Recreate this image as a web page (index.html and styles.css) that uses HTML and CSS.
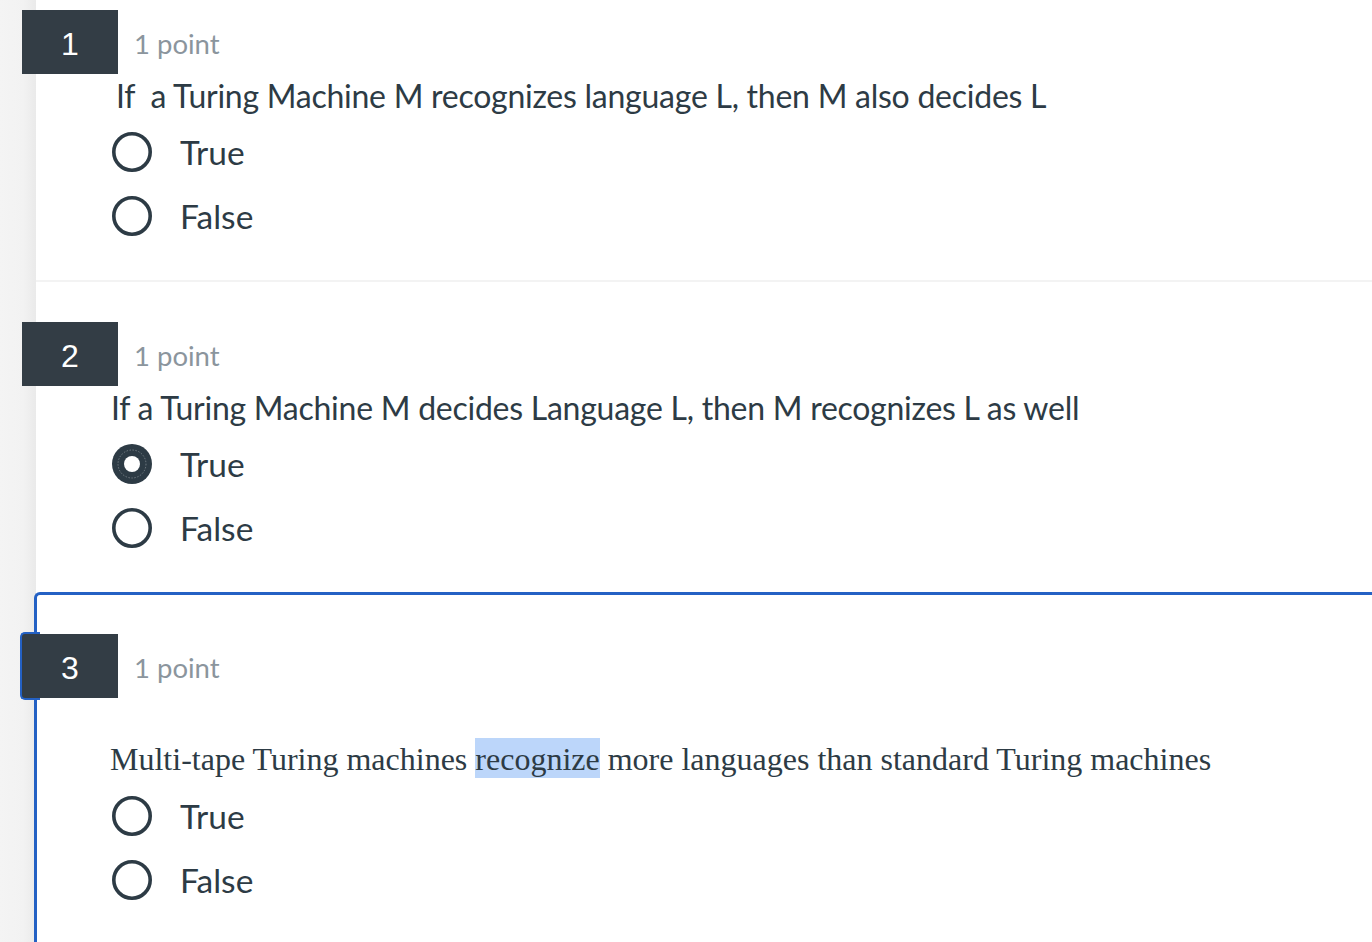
FILE: index.html
```html
<!DOCTYPE html>
<html lang="en">
<head>
<meta charset="utf-8">
<title>Quiz</title>
<link rel="stylesheet" href="styles.css">
</head>
<body>
<div class="page">
  <div class="rail"></div>
  <main class="quiz">
    <section class="question q1 separated">
      <div class="q-header">
        <div class="badge">1</div>
        <div class="points">1 point</div>
      </div>
      <div class="q-text indented">If&nbsp; a Turing Machine M recognizes language L, then M also decides L</div>
      <div class="answers">
        <label class="answer"><svg class="radio" viewBox="0 0 40 40"><circle cx="20" cy="20" r="18.2" fill="none" stroke="#2d3b45" stroke-width="3.6"/></svg><span class="a-label">True</span></label>
        <label class="answer"><svg class="radio" viewBox="0 0 40 40"><circle cx="20" cy="20" r="18.2" fill="none" stroke="#2d3b45" stroke-width="3.6"/></svg><span class="a-label">False</span></label>
      </div>
    </section>

    <section class="question q2">
      <div class="q-header">
        <div class="badge">2</div>
        <div class="points">1 point</div>
      </div>
      <div class="q-text">If a Turing Machine M decides Language L, then M recognizes L as well</div>
      <div class="answers">
        <label class="answer"><svg class="radio" viewBox="0 0 40 40"><circle cx="20" cy="20" r="20" fill="#2d3b45"/><circle cx="20" cy="20" r="14" fill="none" stroke="#ffffff" stroke-opacity="0.3" stroke-width="1" stroke-dasharray="1.5 1.5"/><circle cx="20" cy="20" r="8" fill="#ffffff"/></svg><span class="a-label">True</span></label>
        <label class="answer"><svg class="radio" viewBox="0 0 40 40"><circle cx="20" cy="20" r="18.2" fill="none" stroke="#2d3b45" stroke-width="3.6"/></svg><span class="a-label">False</span></label>
      </div>
    </section>

    <section class="question q3 focused">
      <div class="q-header">
        <div class="badge">3</div>
        <div class="points">1 point</div>
      </div>
      <div class="q-text serif">Multi-tape Turing machines <span class="highlight">recognize</span> more languages than standard Turing machines</div>
      <div class="answers">
        <label class="answer"><svg class="radio" viewBox="0 0 40 40"><circle cx="20" cy="20" r="18.2" fill="none" stroke="#2d3b45" stroke-width="3.6"/></svg><span class="a-label">True</span></label>
        <label class="answer"><svg class="radio" viewBox="0 0 40 40"><circle cx="20" cy="20" r="18.2" fill="none" stroke="#2d3b45" stroke-width="3.6"/></svg><span class="a-label">False</span></label>
      </div>
    </section>
  </main>
</div>
</body>
</html>
```

FILE: styles.css
```css
html, body {
  margin: 0;
  padding: 0;
  height: 942px;
  overflow: hidden;
  background: #ffffff;
}

body {
  font-family: Lato, "Open Sans", sans-serif;
  color: #2d3b45;
}

.page {
  display: flex;
  min-height: 942px;
}

.rail {
  flex: 0 0 36px;
  background: linear-gradient(to right, #f4f4f4 0%, #f2f2f2 65%, #eaeaea 100%);
}

.quiz {
  flex: 1 1 auto;
  min-width: 0;
}

.question {
  padding-top: 40px;
  padding-bottom: 32px;
}

.q1 {
  padding-top: 10px;
}

.separated {
  border-bottom: 2px solid #f3f3f3;
}

.q-header {
  display: flex;
  align-items: flex-start;
  height: 64px;
  margin-left: -14px;
}

.badge {
  position: relative;
  flex: 0 0 96px;
  height: 64px;
  box-sizing: border-box;
  padding-top: 5px;
  background: #333d45;
  color: #ffffff;
  font-family: "Liberation Sans", Arial, sans-serif;
  font-size: 32px;
  display: flex;
  align-items: center;
  justify-content: center;
}

.points {
  margin-left: 16px;
  font-size: 27.5px;
  line-height: 64px;
  padding-top: 2px;
  color: #8b959d;
}

.q-text {
  margin-top: 3px;
  padding-left: 75px;
  font-size: 32px;
  letter-spacing: -0.25px;
  line-height: 38px;
  white-space: nowrap;
}

.indented {
  padding-left: 80px;
}

.answers {
  margin-top: 5px;
  padding-left: 76px;
}

.answer {
  display: flex;
  align-items: center;
  height: 64px;
}

.radio {
  width: 40px;
  height: 40px;
  flex: 0 0 40px;
}

.a-label {
  margin-left: 28px;
  font-size: 33.5px;
  line-height: 40px;
  padding-top: 0;
}

/* focused question 3 */
.focused {
  margin-left: -2px;
  padding-top: 39px;
  min-height: 600px;
  border-top: 3px solid #2461c4;
  border-left: 3px solid #2461c4;
  border-top-left-radius: 6px;
}

.focused .q-header {
  margin-left: -15px;
}

.focused .badge::before {
  content: "";
  position: absolute;
  left: -2px;
  top: -2px;
  bottom: -2px;
  width: 18px;
  border: 2px solid #2461c4;
  border-right: 0;
  border-radius: 5px 0 0 5px;
}

.focused .q-text {
  padding-left: 73px;
}

.focused .answers {
  padding-left: 75px;
}

.serif {
  margin-top: 41px;
  font-family: "Liberation Serif", "Times New Roman", serif;
  font-size: 32px;
  letter-spacing: 0;
  line-height: 40px;
}

.highlight {
  background: #bcd6fa;
  padding-top: 3px;
  padding-bottom: 1px;
}
```
